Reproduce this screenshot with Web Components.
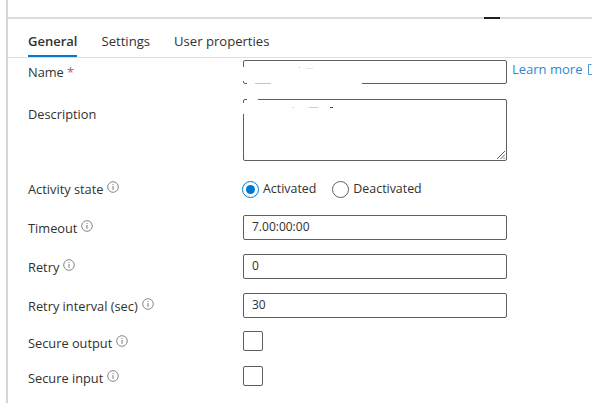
<!DOCTYPE html>
<html>
<head>
<meta charset="utf-8">
<style>
  html, body { margin: 0; background: #fff; height: 100%; overflow: hidden; }
  body { font-family: "Open Sans", "Liberation Sans", sans-serif; color: #323130; }
</style>
</head>
<body>
<activity-panel>
  <panel-tabs slot="tabs"></panel-tabs>
  <form-row label="Name" required height="24" top="2" label-top="0">
    <text-field patch="name"></text-field>
    <a slot="after" class="learn">Learn more<svg style="margin-left:6px;vertical-align:-1px" width="11" height="11" viewBox="0 0 11 11" aria-hidden="true"><path d="M3.500.5H.5v10h10v-3M6 .5h4.500V5M10.500.5 5 6" fill="none" stroke="#4a9ade"/></svg></a>
  </form-row>
  <form-row label="Description" height="62" top="15" label-top="3">
    <text-field multiline patch="description"></text-field>
  </form-row>
  <form-row label="Activity state" info height="22" top="16" label-top="0">
    <radio-pair></radio-pair>
  </form-row>
  <form-row label="Timeout" info height="24" top="16" label-top="1">
    <text-field value="7.00:00:00"></text-field>
  </form-row>
  <form-row label="Retry" info height="24" top="15" label-top="1">
    <text-field value="0"></text-field>
  </form-row>
  <form-row label="Retry interval (sec)" info height="24" top="15" label-top="1">
    <text-field value="30"></text-field>
  </form-row>
  <form-row label="Secure output" info height="20" top="14" label-top="0">
    <check-box></check-box>
  </form-row>
  <form-row label="Secure input" info height="20" top="15" label-top="0">
    <check-box></check-box>
  </form-row>
</activity-panel>

<script>
const INFO_ICON = `<svg width="12" height="12" viewBox="0 0 12 12" aria-hidden="true">
  <circle cx="6" cy="6" r="5.300" fill="none" stroke="#7a7876" stroke-width=".9"/>
  <rect x="5.500" y="5" width="1" height="3.800" fill="#7a7876"/>
  <rect x="5.500" y="3" width="1" height="1" fill="#7a7876"/>
</svg>`;

class ActivityPanel extends HTMLElement {
  constructor() {
    super();
    this.attachShadow({ mode: "open" }).innerHTML = `
      <style>
        :host { display: block; height: 403px; margin-left: 6px; border-left: 2px solid #d6d6d6; box-sizing: border-box; overflow: hidden; }
        .top { height: 17px; border-bottom: 2px solid #dcdcdc; position: relative; }
        .mark { position: absolute; left: 476px; bottom: -2px; width: 16px; height: 2px; background: #201f1e; }
      </style>
      <div class="top"><span class="mark"></span></div>
      <slot name="tabs"></slot>
      <slot></slot>`;
  }
}

class PanelTabs extends HTMLElement {
  constructor() {
    super();
    this.attachShadow({ mode: "open" }).innerHTML = `
      <style>
        :host { display: flex; gap: 24px; height: 38px; padding-left: 20px; border-bottom: 1px solid #e1dfdd; font-size: 13.1px; }
        span { display: block; line-height: 44px; height: 38px; box-sizing: border-box; white-space: nowrap; }
        .on { font-size: 13px; font-weight: 600; border-bottom: 2px solid #0078d4; }
      </style>
      <span class="on">General</span><span>Settings</span><span>User properties</span>`;
  }
}

class FormRow extends HTMLElement {
  constructor() {
    super();
    this.attachShadow({ mode: "open" });
  }
  connectedCallback() {
    const info = this.hasAttribute("info") ? `<span class="i">${INFO_ICON}</span>` : "";
    const req = this.hasAttribute("required") ? ` <span class="req">*</span>` : "";
    this.shadowRoot.innerHTML = `
      <style>
        :host {
          display: grid; grid-template-columns: 215px 264px auto;
          padding-left: 20px; height: ${this.getAttribute("height")}px;
          margin-top: ${this.getAttribute("top")}px;
          font-size: 12.8px;
        }
        .label { line-height: 24px; margin-top: ${this.getAttribute("label-top")}px; font-weight: 500; white-space: nowrap; }
        .req { color: #c8505a; }
        .i { position: relative; top: -4px; margin-left: 4px; }
        .i svg { vertical-align: middle; }
        .after { padding-left: 5px; white-space: nowrap; }
        ::slotted(.learn) { color: #2b88d8; font-size: 13px; line-height: 19px; white-space: nowrap; display: block; }
      </style>
      <div class="label">${this.getAttribute("label")}${req}${info}</div>
      <div><slot></slot></div>
      <div class="after"><slot name="after"></slot></div>`;
  }
}

class TextField extends HTMLElement {
  constructor() {
    super();
    this.attachShadow({ mode: "open" });
  }
  connectedCallback() {
    const multi = this.hasAttribute("multiline");
    const patch = this.getAttribute("patch");
    let covers = "";
    // white-outs painted over the field in the source picture, with the specks they left
    if (patch === "name") {
      covers = `<i style="left:-1px;top:6px;width:2px;height:14px"></i>
        <i style="left:3px;bottom:-1px;width:115px;height:1px"></i>
        <i style="left:11px;bottom:-1px;width:16px;height:1px;background:#c4c4c4"></i>
        <i style="left:55px;top:6px;width:1px;height:1px;background:#bbb"></i>
        <i style="left:62px;top:7px;width:7px;height:1px;background:#dbe8f0"></i>`;
    }
    if (patch === "description") {
      covers = `<i style="left:-1px;top:3px;width:2px;height:11px"></i>
        <i style="left:3px;top:-1px;width:11px;height:1px"></i>
        <i style="left:48px;top:7px;width:2px;height:1px;background:#d5dde2"></i>
        <i style="left:65px;top:7px;width:9px;height:1px;background:#ccc"></i>
        <i style="left:86px;top:7px;width:3px;height:1px;background:#5a3a50"></i>`;
    }
    const grip = multi ? `<svg class="grip" width="8" height="8" viewBox="0 0 8 8"><path d="M0 8 8 0M3.500 8 8 3.500M6.500 8 8 6.500" stroke="#605e5c" stroke-width="1" fill="none"/></svg>` : "";
    this.shadowRoot.innerHTML = `
      <style>
        :host { display: block; height: 100%; }
        .box { position: relative; height: 100%; box-sizing: border-box; border: 1px solid #605e5c; border-radius: 2px; padding: 0 8px; font-size: 12px; line-height: 22px; color: #323130; }
        i { position: absolute; background: #fff; }
        .grip { position: absolute; right: 1px; bottom: 1px; }
      </style>
      <div class="box">${this.getAttribute("value") || ""}${covers}${grip}</div>`;
  }
}

class RadioPair extends HTMLElement {
  constructor() {
    super();
    this.attachShadow({ mode: "open" }).innerHTML = `
      <style>
        :host { display: flex; align-items: center; height: 100%; font-size: 12.4px; gap: 16px; margin-left: -1px; }
        label { display: flex; align-items: center; gap: 4px; }
        span.t { display: block; padding-bottom: 2px; }
        .dot { width: 15px; height: 15px; border-radius: 50%; border: 1px solid #605e5c; position: relative; }
        .dot.on { border-color: #0078d4; }
        .dot.on::after { content: ""; position: absolute; inset: 3px; border-radius: 50%; background: #0078d4; }
      </style>
      <label><span class="dot on"></span><span class="t">Activated</span></label>
      <label><span class="dot"></span><span class="t">Deactivated</span></label>`;
  }
}

class CheckBox extends HTMLElement {
  constructor() {
    super();
    this.attachShadow({ mode: "open" }).innerHTML = `
      <style>
        :host { display: block; width: 20px; height: 20px; box-sizing: border-box; border: 1px solid #605e5c; border-radius: 2px; }
      </style>`;
  }
}

customElements.define("activity-panel", ActivityPanel);
customElements.define("panel-tabs", PanelTabs);
customElements.define("form-row", FormRow);
customElements.define("text-field", TextField);
customElements.define("radio-pair", RadioPair);
customElements.define("check-box", CheckBox);
</script>
</body>
</html>
